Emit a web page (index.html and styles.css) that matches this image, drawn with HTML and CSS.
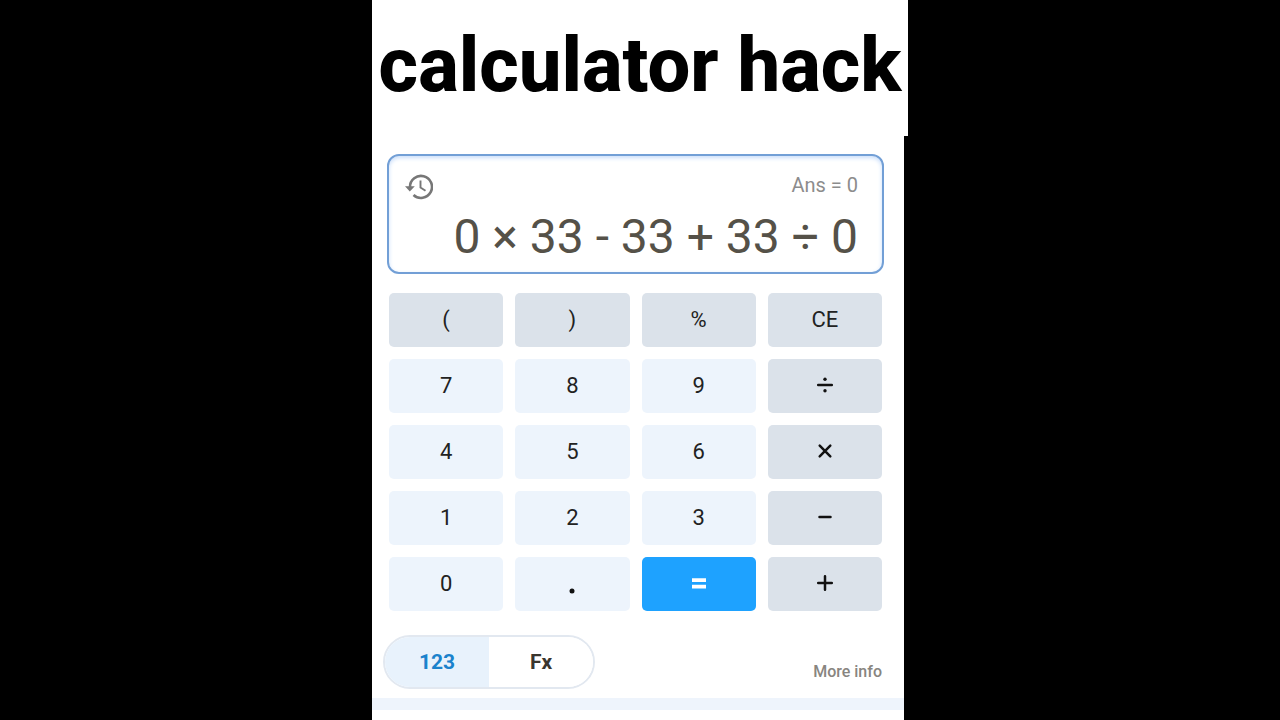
FILE: index.html
```html
<!DOCTYPE html>
<html lang="en">
<head>
    <meta charset="UTF-8">
    <meta name="viewport" content="width=device-width, initial-scale=1.0">
    <title>calculator hack</title>
    <link rel="stylesheet" href="styles.css">
</head>
<body>
    <main class="phone">
        <header class="header">
            <h1 class="title">calculator hack</h1>
        </header>

        <div class="page">
            <section class="calculator">
                <div class="display">
                    <div class="display-top">
                        <button class="history" aria-label="History">
                            <svg viewBox="0 0 28 26" width="28" height="26">
                                <path d="M5 13A11 11 0 1 1 8.500 21" fill="none" stroke="currentColor" stroke-width="2.600"/>
                                <path d="M0 12.300h9.800L4.800 17.500z" fill="currentColor"/>
                                <path d="M15.500 6.500v7l5 3.200" fill="none" stroke="currentColor" stroke-width="1.900"/>
                            </svg>
                        </button>
                        <span class="answer">Ans = 0</span>
                    </div>
                    <output class="expression" id="expression">0 × 33 - 33 + 33 ÷ 0</output>
                </div>

                <div class="buttons">
                    <button class="button operator">(</button>
                    <button class="button operator">)</button>
                    <button class="button operator">%</button>
                    <button class="button operator">CE</button>

                    <button class="button">7</button>
                    <button class="button">8</button>
                    <button class="button">9</button>
                    <button class="button operator" aria-label="Divide">
                        <svg viewBox="0 0 16 16" width="16" height="16"><path d="M1.200 8h13.600"/><circle cx="8" cy="2.200" r="1.700"/><circle cx="8" cy="13.800" r="1.700"/></svg>
                    </button>

                    <button class="button">4</button>
                    <button class="button">5</button>
                    <button class="button">6</button>
                    <button class="button operator" aria-label="Multiply">
                        <svg viewBox="0 0 16 16" width="16" height="16"><path d="M2.700 2.700l10.600 10.600M13.300 2.700L2.700 13.300"/></svg>
                    </button>

                    <button class="button">1</button>
                    <button class="button">2</button>
                    <button class="button">3</button>
                    <button class="button operator" aria-label="Subtract">
                        <svg viewBox="0 0 16 16" width="16" height="16"><path d="M2.500 8h11"/></svg>
                    </button>

                    <button class="button">0</button>
                    <button class="button" aria-label="Decimal point">
                        <svg viewBox="0 0 16 16" width="16" height="16"><circle cx="8" cy="16" r="2.500"/></svg>
                    </button>
                    <button class="button equal" aria-label="Equals">
                        <svg viewBox="0 0 16 16" width="16" height="16"><path d="M1 3.300h14v3.700H1zM1 9.700h14v3.700H1z"/></svg>
                    </button>
                    <button class="button operator" aria-label="Add">
                        <svg viewBox="0 0 16 16" width="16" height="16"><path d="M1.200 8h13.600M8 1.200v13.600"/></svg>
                    </button>
                </div>
            </section>

            <div class="bottom">
                <div class="toggle">
                    <button class="tab active">123</button>
                    <button class="tab">Fx</button>
                </div>
                <a class="more" href="#">More info</a>
            </div>

            <div class="divider"></div>
        </div>
    </main>
</body>
</html>
```
FILE: styles.css
```css
* {
    box-sizing: border-box;
}

body {
    font-family: Roboto, Arial, sans-serif;
    background: #000;
    margin: 0;
}

.phone {
    display: flex;
    flex-direction: column;
    max-width: 536px;
    min-height: 100vh;
    margin: 0 auto;
}

.header {
    background: #fff;
    padding: 21px 0 27px;
}

.title {
    margin: 0;
    font-size: 76px;
    line-height: 88px;
    font-weight: 800;
    text-align: center;
    white-space: nowrap;
    color: #000;
}

.page {
    flex: 1;
    margin-right: 4px;
    background: #fff;
}

.calculator {
    padding: 18px 20px 24px 15px;
}

.display {
    border: 2px solid #729fd6;
    border-radius: 12px;
    height: 120px;
    padding: 16px 24px 0 16px;
    box-shadow: inset 0 2px 4px #c9defa;
}

.display-top {
    display: flex;
    justify-content: space-between;
    align-items: flex-start;
}

.history {
    display: flex;
    padding: 2px 0 0;
    border: none;
    background: none;
    color: #777;
    cursor: pointer;
}

.answer {
    font-size: 20px;
    line-height: 26px;
    color: #8c8c8c;
}

.expression {
    display: block;
    font-size: 48px;
    line-height: 74px;
    text-align: right;
    white-space: nowrap;
    color: #555148;
}

.buttons {
    display: grid;
    grid-template-columns: repeat(4, 1fr);
    gap: 12px;
    margin: 19px 2px 0;
}

.button {
    display: flex;
    justify-content: center;
    align-items: center;
    height: 54px;
    padding: 0 0 2px;
    background: #edf4fc;
    color: #222;
    border: none;
    border-radius: 5px;
    font-family: inherit;
    font-size: 22px;
    cursor: pointer;
}

.button svg {
    overflow: visible;
    fill: #111;
    stroke: #111;
    stroke-width: 2.5;
    stroke-linecap: round;
}

.button circle {
    stroke: none;
}

.button.operator {
    background: #dbe2ea;
}

.button.equal {
    background: #1ea2ff;
}

.button.equal svg {
    fill: #fff;
    stroke: none;
}

.bottom {
    display: flex;
    justify-content: space-between;
    align-items: flex-end;
    padding: 0 22px 9px 11px;
}

.toggle {
    display: flex;
    width: 212px;
    height: 54px;
    border: 2px solid #e2e8f0;
    border-radius: 27px;
    overflow: hidden;
}

.tab {
    flex: 1;
    padding: 0;
    border: none;
    background: #fff;
    color: #3a362e;
    font-family: inherit;
    font-size: 21px;
    font-weight: 700;
    cursor: pointer;
}

.tab.active {
    background: #e8f2fc;
    color: #1a82cc;
}

.more {
    font-size: 16px;
    line-height: 20px;
    font-weight: 500;
    color: #888580;
    text-decoration: none;
    padding-bottom: 7px;
}

.divider {
    height: 12px;
    background: #eef4fc;
}
```
